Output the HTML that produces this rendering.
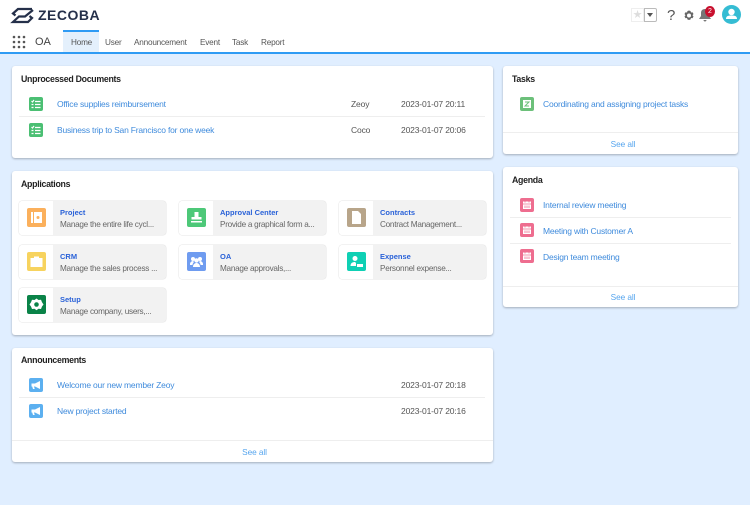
<!DOCTYPE html>
<html><head><meta charset="utf-8">
<style>
html,body{margin:0;padding:0}
body{width:750px;height:505px;background:#e0eeff;overflow:hidden;position:relative;font-family:"Liberation Sans",sans-serif;font-size:8.5px;color:#555}
.a{position:absolute;white-space:nowrap}
.card{position:absolute;background:#fff;border-radius:3px;box-shadow:0 1px 2px rgba(0,0,0,.28)}
.t{position:absolute;font-weight:bold;font-size:8.8px;letter-spacing:-.3px;color:#222;white-space:nowrap}
.l{position:absolute;color:#3f8bdc;font-size:8.5px;letter-spacing:-.2px;white-space:nowrap}
.g{position:absolute;color:#555;font-size:8.5px;letter-spacing:-.15px;white-space:nowrap}
.hr{position:absolute;height:1px;background:#eee}
.ic{position:absolute;width:14px;height:14px;border-radius:2px}
.ic svg,.bi svg{display:block;width:100%;height:100%}
.app{position:absolute;width:147px;height:34px;background:#f2f2f2;border-radius:3px;box-shadow:0 0 0 .5px #e6e6e6}
.app .w{position:absolute;left:0;top:0;width:34px;height:34px;background:#fff;border-radius:3px 0 0 3px}
.bi{position:absolute;left:8px;top:7px;width:19px;height:19px;border-radius:2px}
.app b{position:absolute;left:41px;top:7px;font-size:7.5px;color:#2a62d8;white-space:nowrap}
.app span{position:absolute;left:41px;top:18.5px;font-size:8.2px;letter-spacing:-.27px;color:#666;white-space:nowrap}
.see{position:absolute;left:0;right:0;text-align:center;color:#56a5ee;font-size:8.3px;letter-spacing:-.1px}
.nav{position:absolute;top:37.5px;font-size:8.2px;letter-spacing:-.2px;color:#555;white-space:nowrap}
</style></head><body>
<div class="a" style="left:0;top:0;width:750px;height:52px;background:#fff"></div>
<div class="a" style="left:0;top:52px;width:750px;height:2px;background:#2f9bf4"></div>
<svg class="a" style="left:10px;top:7px" width="24" height="17" viewBox="0 0 24 17"><path d="M22 2H8L3 6.500 5.500 8.500M23 3L15 9.500H9L3 15H18L22 11 19.500 9" fill="none" stroke="#25304a" stroke-width="2.200"/></svg>
<div class="a" style="left:38px;top:7px;font-size:14px;font-weight:bold;letter-spacing:.5px;color:#25304a;line-height:17px">ZECOBA</div>
<svg class="a" style="left:12px;top:35px" width="14" height="14"><g fill="#555"><circle cx="2" cy="2" r="1.300"/><circle cx="7" cy="2" r="1.300"/><circle cx="12" cy="2" r="1.300"/><circle cx="2" cy="7" r="1.300"/><circle cx="7" cy="7" r="1.300"/><circle cx="12" cy="7" r="1.300"/><circle cx="2" cy="12" r="1.300"/><circle cx="7" cy="12" r="1.300"/><circle cx="12" cy="12" r="1.300"/></g></svg>
<div class="a" style="left:35px;top:36px;font-size:11px;color:#444">OA</div>
<div class="a" style="left:63px;top:30px;width:36px;height:22px;background:#e4f0fc;border-top:2px solid #2f9bf4;box-sizing:border-box"></div>
<div class="nav" style="left:71px">Home</div>
<div class="nav" style="left:105px">User</div>
<div class="nav" style="left:134px">Announcement</div>
<div class="nav" style="left:200px">Event</div>
<div class="nav" style="left:232px">Task</div>
<div class="nav" style="left:261px">Report</div>

<div class="a" style="left:631px;top:8px;width:13px;height:14px;border:1px solid #eee;box-sizing:border-box;text-align:center;color:#ddd;font-size:11px;line-height:13px">★</div>
<div class="a" style="left:644px;top:8px;width:13px;height:14px;border:1px solid #bbb;border-radius:0 2px 2px 0;box-sizing:border-box"></div>
<div class="a" style="left:647px;top:13px;width:0;height:0;border:3.500px solid transparent;border-top:4px solid #555"></div>
<div class="a" style="left:667px;top:8px;font-size:15px;color:#555;line-height:15px">?</div>
<svg class="a" style="left:683px;top:9px" width="12" height="13" viewBox="0 0 24 24"><path d="M12 2l3 1 1 3 3-.5 2 3.500-2 2.500 2 2.500-2 3.500-3-.5-1 3-3 1-3-1-1-3-3 .5-2-3.500 2-2.500-2-2.500 2-3.500 3 .5 1-3z" fill="#666"/><circle cx="12" cy="12" r="4" fill="#fff"/></svg>
<svg class="a" style="left:699px;top:9px" width="12" height="13" viewBox="0 0 12 13"><path d="M6 0c3 0 4 2 4 4v3l2 3H0l2-3V4c0-2 1-4 4-4zM4.500 11h3c0 2-3 2-3 0z" fill="#777"/></svg>
<div class="a" style="left:705px;top:6px;width:10px;height:11px;border-radius:50%;background:#c8102e;color:#fff;font-size:7px;text-align:center;line-height:11px">2</div>
<svg class="a" style="left:722px;top:5px" width="19" height="19" viewBox="0 0 19 19"><circle cx="9.500" cy="9.500" r="9.500" fill="#35bcd3"/><circle cx="9.500" cy="7" r="3.200" fill="#fff"/><path d="M4 14c0-3 2-3.500 5.500-3.500S15 11 15 14z" fill="#fff"/></svg>

<!-- Unprocessed -->
<div class="card" style="left:12px;top:66px;width:481px;height:92px"></div>
<div class="t" style="left:21px;top:74px">Unprocessed Documents</div>
<div class="ic" style="left:29px;top:97px;background:#4bbf73"><svg viewBox="0 0 14 14"><path d="M2.500 4l1 1 1.500-2M2.500 7.500h2M2.500 10.500h2M6 4.500h5.500M6 7.500h5.500M6 10.500h5.500" stroke="#fff" stroke-width="1.200" fill="none"/></svg></div>
<div class="l" style="left:57px;top:99px">Office supplies reimbursement</div>
<div class="g" style="left:351px;top:99px">Zeoy</div>
<div class="g" style="left:401px;top:99px">2023-01-07 20:11</div>
<div class="hr" style="left:19px;top:116px;width:466px"></div>
<div class="ic" style="left:29px;top:122.500px;background:#4bbf73"><svg viewBox="0 0 14 14"><path d="M2.500 4l1 1 1.500-2M2.500 7.500h2M2.500 10.500h2M6 4.500h5.500M6 7.500h5.500M6 10.500h5.500" stroke="#fff" stroke-width="1.200" fill="none"/></svg></div>
<div class="l" style="left:57px;top:125px">Business trip to San Francisco for one week</div>
<div class="g" style="left:351px;top:125px">Coco</div>
<div class="g" style="left:401px;top:125px">2023-01-07 20:06</div>

<!-- Applications -->
<div class="card" style="left:12px;top:171px;width:481px;height:164px"></div>
<div class="t" style="left:21px;top:179px">Applications</div>

<div class="app" style="left:19px;top:201px"><div class="w"></div><div class="bi" style="background:#fbb05c"><svg viewBox="0 0 19 19"><path d="M4 4h2v11H4zM7 4h8v11H7z" fill="#fff"/><circle cx="11" cy="9.500" r="1.500" fill="#fbb05c"/></svg></div><b>Project</b><span>Manage the entire life cycl...</span></div>
<div class="app" style="left:179px;top:201px"><div class="w"></div><div class="bi" style="background:#4dc878"><svg viewBox="0 0 19 19"><path d="M7.500 4h4v5h3v2.500h-10V9h3zM4 13h11v1.500H4z" fill="#fff"/></svg></div><b>Approval Center</b><span>Provide a graphical form a...</span></div>
<div class="app" style="left:339px;top:201px"><div class="w"></div><div class="bi" style="background:#b8a58a"><svg viewBox="0 0 19 19"><path d="M5 3h6l3 3v10H5z" fill="#fff"/></svg></div><b>Contracts</b><span>Contract Management...</span></div>

<div class="app" style="left:19px;top:245px"><div class="w"></div><div class="bi" style="background:#f7d35e"><svg viewBox="0 0 19 19"><path d="M7 6V4.500h5V6h3.500v9h-12V6z" fill="#fff"/></svg></div><b>CRM</b><span>Manage the sales process ...</span></div>
<div class="app" style="left:179px;top:245px"><div class="w"></div><div class="bi" style="background:#6f9cf0"><svg viewBox="0 0 19 19"><circle cx="6" cy="7" r="2" fill="#fff"/><circle cx="13" cy="7" r="2" fill="#fff"/><circle cx="9.500" cy="8.500" r="2.200" fill="#fff"/><path d="M3 12c0-2 2-3 3-3l1 1c-1 1-1.500 2-1.500 3H3zM16 12c0-2-2-3-3-3l-1 1c1 1 1.500 2 1.500 3H16zM6 15c0-3 2-4 3.500-4s3.500 1 3.500 4z" fill="#fff"/></svg></div><b>OA</b><span>Manage approvals,...</span></div>
<div class="app" style="left:339px;top:245px"><div class="w"></div><div class="bi" style="background:#0fd0b4"><svg viewBox="0 0 19 19"><circle cx="8" cy="6.500" r="2.500" fill="#fff"/><path d="M3.500 14c0-3 2-4 4.500-4l1 1v3z" fill="#fff"/><path d="M10 12h6v3h-6z" fill="#fff"/></svg></div><b>Expense</b><span>Personnel expense...</span></div>

<div class="app" style="left:19px;top:288px"><div class="w"></div><div class="bi" style="background:#0a8348"><svg viewBox="0 0 19 19"><path d="M9.500 3.500l2 1.500 2.500-.2 1 2.500 1.500 2.200-1.500 2-1 2.500-2.500-.2-2 1.500-2-1.500-2.500.2-1-2.500-1.500-2 1.500-2.200 1-2.500 2.500.2z" fill="#fff"/><circle cx="9.500" cy="9.500" r="2.300" fill="#0a8348"/></svg></div><b>Setup</b><span>Manage company, users,...</span></div>

<!-- Announcements -->
<div class="card" style="left:12px;top:348px;width:481px;height:114px"></div>
<div class="t" style="left:21px;top:355px">Announcements</div>
<div class="ic" style="left:29px;top:378px;background:#5cb0f0"><svg viewBox="0 0 14 14"><path d="M2.500 5.500H6L11 3v8L6 8.500H5l.7 2.500H4L3.200 8.500h-.7z" fill="#fff"/></svg></div>
<div class="l" style="left:57px;top:380px">Welcome our new member Zeoy</div>
<div class="g" style="left:401px;top:380px">2023-01-07 20:18</div>
<div class="hr" style="left:19px;top:397px;width:466px"></div>
<div class="ic" style="left:29px;top:404px;background:#5cb0f0"><svg viewBox="0 0 14 14"><path d="M2.500 5.500H6L11 3v8L6 8.500H5l.7 2.500H4L3.200 8.500h-.7z" fill="#fff"/></svg></div>
<div class="l" style="left:57px;top:406px">New project started</div>
<div class="g" style="left:401px;top:406px">2023-01-07 20:16</div>
<div class="hr" style="left:12px;top:440px;width:481px"></div>
<div class="see" style="left:12px;width:485px;top:447px">See all</div>

<!-- Tasks -->
<div class="card" style="left:503px;top:66px;width:235px;height:88px"></div>
<div class="t" style="left:512px;top:74px">Tasks</div>
<div class="ic" style="left:520px;top:97px;background:#6cc07a"><svg viewBox="0 0 14 14"><path d="M3 3h8v8H3z" fill="#fff"/><path d="M5 5h4L5 9h4" stroke="#6cc07a" stroke-width="1" fill="none"/></svg></div>
<div class="l" style="left:543px;top:99px">Coordinating and assigning project tasks</div>
<div class="hr" style="left:503px;top:132px;width:235px"></div>
<div class="see" style="left:503px;width:240px;top:139px">See all</div>

<!-- Agenda -->
<div class="card" style="left:503px;top:167px;width:235px;height:140px"></div>
<div class="t" style="left:512px;top:175px">Agenda</div>
<div class="ic" style="left:520px;top:198px;background:#ee6d8f"><svg viewBox="0 0 14 14"><path d="M3 3.500h8V11H3z" fill="#fff"/><path d="M3 6h8M5 2.500v2M9 2.500v2M5 7.500v2.500M7 7.500v2.500M9 7.500v2.500" stroke="#ee6d8f" stroke-width=".8"/></svg></div>
<div class="l" style="left:543px;top:200px">Internal review meeting</div>
<div class="hr" style="left:510px;top:217px;width:221px"></div>
<div class="ic" style="left:520px;top:223px;background:#ee6d8f"><svg viewBox="0 0 14 14"><path d="M3 3.500h8V11H3z" fill="#fff"/><path d="M3 6h8M5 2.500v2M9 2.500v2M5 7.500v2.500M7 7.500v2.500M9 7.500v2.500" stroke="#ee6d8f" stroke-width=".8"/></svg></div>
<div class="l" style="left:543px;top:226px">Meeting with Customer A</div>
<div class="hr" style="left:510px;top:243px;width:221px"></div>
<div class="ic" style="left:520px;top:249px;background:#ee6d8f"><svg viewBox="0 0 14 14"><path d="M3 3.500h8V11H3z" fill="#fff"/><path d="M3 6h8M5 2.500v2M9 2.500v2M5 7.500v2.500M7 7.500v2.500M9 7.500v2.500" stroke="#ee6d8f" stroke-width=".8"/></svg></div>
<div class="l" style="left:543px;top:252px">Design team meeting</div>
<div class="hr" style="left:503px;top:286px;width:235px"></div>
<div class="see" style="left:503px;width:240px;top:292px">See all</div>
</body></html>
